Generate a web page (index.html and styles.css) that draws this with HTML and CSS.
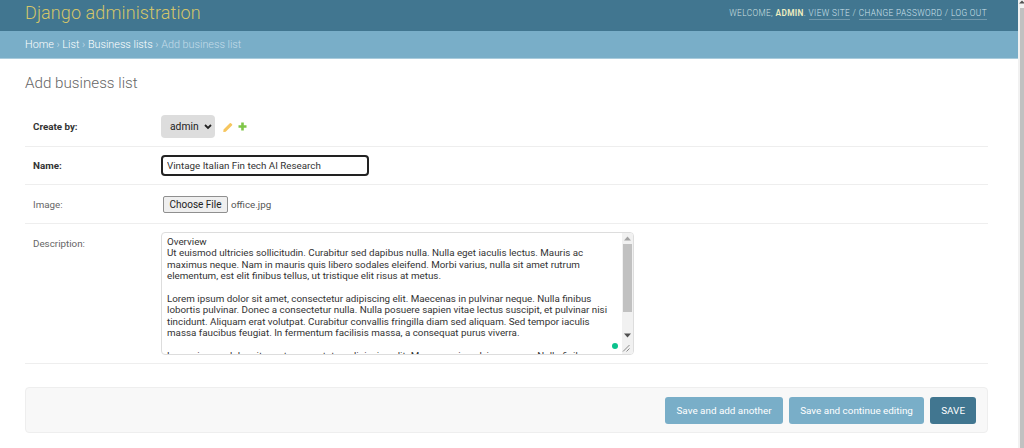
FILE: index.html
```html
<!DOCTYPE html>
<html lang="en">
<head>
<meta charset="utf-8">
<title>Add business list</title>
<link rel="stylesheet" href="styles.css">
</head>
<body>
<div class="page">
  <header class="header">
    <div class="branding">Django administration</div>
    <div class="tools">WELCOME, <strong>ADMIN</strong>. <a href="#">VIEW SITE</a> / <a href="#">CHANGE PASSWORD</a> / <a href="#">LOG OUT</a></div>
  </header>
  <nav class="crumbs"><a href="#">Home</a> › <a href="#">List</a> › <a href="#">Business lists</a> › Add business list</nav>
  <main class="content">
    <h1 class="title">Add business list</h1>
    <form class="form">
      <div class="row row-user">
        <label class="label required">Create by:</label>
        <div class="field">
          <div class="select">admin<svg class="chev" width="8" height="6" viewBox="0 0 8 6"><path d="M1 1l3 3 3-3" fill="none" stroke="#222" stroke-width="1.8"/></svg></div>
          <svg class="icon" width="10" height="10" viewBox="0 0 10 10"><path d="M0.500 7.500L6.800 1.200q.6-.6 1.200 0l1 1q.6.6 0 1.200L2.700 9.700l-2.400.4z" fill="#f6c65f"/></svg>
          <svg class="icon" width="9" height="9" viewBox="0 0 9 9"><path d="M3.200 .5h2.600v2.700h2.700v2.600H5.800v2.700H3.200V5.800H.5V3.200h2.700z" fill="#7fc648"/></svg>
        </div>
      </div>
      <div class="row row-name">
        <label class="label required">Name:</label>
        <div class="field"><input class="text" type="text" value="Vintage Italian Fin tech AI Research"></div>
      </div>
      <div class="row row-image">
        <label class="label">Image:</label>
        <div class="field file"><button type="button" class="choose">Choose File</button><span>office.jpg</span></div>
      </div>
      <div class="row row-desc">
        <label class="label desc-label">Description:</label>
        <div class="field">
          <div class="area">
            <div class="area-text">Overview
Ut euismod ultricies sollicitudin. Curabitur sed dapibus nulla. Nulla eget iaculis lectus. Mauris ac
maximus neque. Nam in mauris quis libero sodales eleifend. Morbi varius, nulla sit amet rutrum
elementum, est elit finibus tellus, ut tristique elit risus at metus.

Lorem ipsum dolor sit amet, consectetur adipiscing elit. Maecenas in pulvinar neque. Nulla finibus
lobortis pulvinar. Donec a consectetur nulla. Nulla posuere sapien vitae lectus suscipit, et pulvinar nisi
tincidunt. Aliquam erat volutpat. Curabitur convallis fringilla diam sed aliquam. Sed tempor iaculis
massa faucibus feugiat. In fermentum facilisis massa, a consequat purus viverra.

Lorem ipsum dolor sit amet, consectetur adipiscing elit. Maecenas in pulvinar neque. Nulla finibus</div>
            <div class="area-bar">
              <svg width="7" height="5" viewBox="0 0 7 5"><path d="M3.500 0.500L7 4.500H0z" fill="#a3a3a3"/></svg>
              <div class="area-thumb"></div>
              <svg width="7" height="5" viewBox="0 0 7 5"><path d="M3.500 4.500L7 0.500H0z" fill="#505050"/></svg>
              <div class="area-corner"><svg width="8" height="8" viewBox="0 0 8 8"><path d="M7.500 1L1 7.500M7.500 4.500L4.500 7.500" stroke="#888" fill="none"/></svg></div>
            </div>
            <span class="dot"></span>
          </div>
        </div>
      </div>
      <div class="actions">
        <button type="button" class="btn">Save and add another</button>
        <button type="button" class="btn">Save and continue editing</button>
        <button type="button" class="btn primary">SAVE</button>
      </div>
    </form>
  </main>
</div>
<div class="scrollbar">
  <svg class="scroll-arrow" width="6" height="4" viewBox="0 0 6 4"><path d="M3 .5L6 3.500H0z" fill="#505050"/></svg>
  <div class="scrollbar-thumb"></div>
</div>
</body>
</html>
```
FILE: styles.css
```css
* { box-sizing: border-box; }
html, body { margin: 0; height: 448px; overflow: hidden; }
body { display: flex; font-family: Roboto, "Liberation Sans", sans-serif; font-size: 9.800px; color: #333; background: #fff; }
.page { width: 1018px; height: 448px; overflow: hidden; flex: none; }
.header { height: 31px; background: #417690; display: flex; justify-content: space-between; padding: 0 31px 0 25px; }
.branding { color: #d3c56a; font-size: 18px; font-weight: 300; line-height: 25px; letter-spacing: .1px; }
.tools { color: #cfe0e0; font-size: 8.250px; letter-spacing: .4px; line-height: 26px; font-weight: 300; }
.tools strong { font-weight: 600; color: #f0efc0; }
.tools a { color: #cfe2ec; text-decoration: none; border-bottom: 1px solid rgba(255,255,255,.25); padding-bottom: 1px; }
.crumbs { height: 28px; background: #79aec8; border-bottom: 1px solid #a9cbdc; color: #c4dce8; padding: 0 25px; font-size: 10.800px; line-height: 27px; font-weight: 300; }
.crumbs a { color: #fff; text-decoration: none; }
.content { padding: 0 30px 0 25px; }
.title { font-size: 15.200px; font-weight: 300; color: #666; margin: 0; height: 48px; line-height: 48px; }
.row { display: flex; border-bottom: 1px solid #eee; padding-left: 8px; }
.row-user { height: 40px; align-items: center; }
.row-name { height: 38px; align-items: center; }
.row-image { height: 39px; align-items: center; }
.row-desc { height: 140px; padding-top: 8px; }
.label { width: 128px; flex: none; color: #666; font-size: 9.800px; }
.desc-label { padding-top: 6px; }
.required { color: #333; font-weight: 700; }
.field { display: flex; align-items: center; align-self: flex-start; }
.row-user .field, .row-name .field, .row-image .field { align-self: center; }
.select { width: 54px; height: 23px; background: #ddd; border-radius: 4px; display: flex; align-items: center; justify-content: space-between; padding: 0 3px 0 9px; font-size: 10.300px; color: #222; }
.icon { margin-left: 8px; }
.icon + .icon { margin-left: 5px; }
.text { width: 208px; height: 21px; border: 2px solid #222; border-radius: 4px; padding: 0 4px 1px; font: 9.800px Roboto, sans-serif; color: #333; outline: none; }
.file { gap: 3px; font-size: 9.800px; color: #555; padding-left: 2px; }
.choose { height: 17px; width: 65px; padding: 0; border: 1px solid #8f8f8f; border-radius: 2px; background: #efefef; font: 10px Roboto, sans-serif; color: #222; }
.area { position: relative; width: 473px; height: 123px; border: 1px solid #ddd; border-radius: 4px; overflow: hidden; display: flex; }
.area-text { flex: 1; min-width: 0; padding: 3px 5px; white-space: pre; font-size: 9.800px; line-height: 11.400px; color: #333; overflow: hidden; }
.area-bar { width: 11px; flex: none; background: #f1f1f1; display: flex; flex-direction: column; align-items: center; padding-top: 3px; position: relative; }
.area-thumb { width: 9px; height: 68px; background: #c1c1c1; margin: 3px 0 21px; }
.area-corner { position: absolute; right: 0; bottom: 0; width: 11px; height: 11px; background: #f1f1f1; }
.dot { position: absolute; right: 15px; bottom: 5px; width: 6px; height: 6px; border-radius: 50%; background: #0bc28d; }
.actions { margin-top: 23px; height: 46px; background: #f8f8f8; border: 1px solid #eee; border-radius: 4px; display: flex; justify-content: flex-end; align-items: center; gap: 6px; padding-right: 11px; }
.btn { height: 27px; border: 0; border-radius: 3px; background: #79aec8; color: #fff; font: 9.900px Roboto, sans-serif; padding: 0 11.300px; }
.primary { background: #417690; padding: 0 11px; }
.scrollbar { width: 6px; height: 448px; background: #f1f1f1; flex: none; position: relative; padding: 8px 0 0 2px; }
.scroll-arrow { position: absolute; left: 1px; top: 0; }
.scrollbar-thumb { height: 440px; background: #c1c1c1; }
```
